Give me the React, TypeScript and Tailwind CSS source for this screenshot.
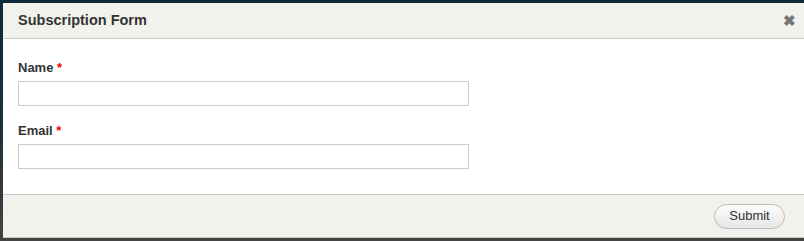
import React from "react";

function Field({ label }: { label: string }) {
  return (
    <div>
      <label className="block text-[13px] font-bold leading-[16px] text-[#333]">
        {label} <span className="text-[#e00]">*</span>
      </label>
      <input
        type="text"
        className="mt-[5px] block h-[25px] w-[451px] border border-[#ccc] bg-white px-1 text-[13px] outline-none"
      />
    </div>
  );
}

export default function App() {
  return (
    <div
      className="flex h-[241px] w-[804px] flex-col bg-gradient-to-b from-[#0e2a3a] via-[#1b2e38] to-[#444] pl-[3px] pt-[3px] pb-[3px]"
      style={{ fontFamily: '"Liberation Sans", Arial, sans-serif' }}
    >
      <div className="flex flex-1 flex-col bg-white">
        <div className="flex h-[36px] items-center justify-between border-b border-[#ccc] bg-[#f2f2ec] pl-[15px] pr-[8px]">
          <h2 className="text-[14.5px] font-bold text-[#333]">Subscription Form</h2>
          <span className="text-[15px] font-bold leading-none text-[#777]">✖</span>
        </div>
        <div className="flex flex-col gap-[17px] px-[15px] pt-[21px] pb-[25px]">
          <Field label="Name" />
          <Field label="Email" />
        </div>
        <div className="flex flex-1 items-center justify-end border-t border-b border-[#ccc] bg-[#f2f2ec] pr-[19px]">
          <button className="h-[25px] w-[71px] rounded-full border border-[#bbb] bg-gradient-to-b from-[#fdfdfd] to-[#e6e6e6] text-[13px] text-[#333]">
            Submit
          </button>
        </div>
      </div>
    </div>
  );
}
